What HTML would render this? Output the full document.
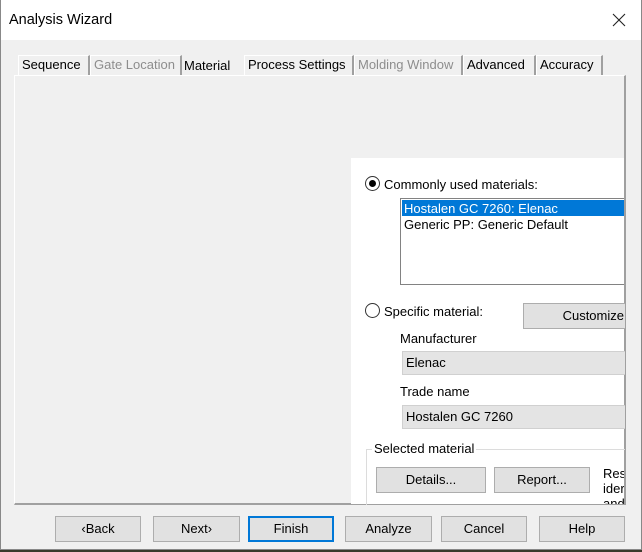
<!DOCTYPE html>
<html><head><style>
*{margin:0;padding:0;box-sizing:border-box}
body{width:642px;height:552px;background:#3a3a2a;font-family:"Liberation Sans",sans-serif;font-size:13px;color:#000;position:relative;overflow:hidden}
.win{position:absolute;left:0;top:0;width:642px;height:550px;background:#f0f0f0;border-left:1px solid #888;border-right:1px solid #888;border-bottom:1px solid #888}
.title{position:absolute;left:0;top:0;width:640px;height:40px;background:#fff}
.abs{position:absolute}
.tab{position:absolute;top:55px;height:20px;line-height:18px;padding-left:3px;border-right:2px solid #a0a0a0;border-left:1px solid #fff;border-top:1px solid #fff;white-space:nowrap}
.dis{color:#8d8d8d}
.btn{position:absolute;background:#e1e1e1;border:1px solid #adadad;text-align:center;line-height:24px}
.field{position:absolute;background:#e4e4e4;border:1px solid #d0d0d0;padding-left:3px;line-height:22px}
</style></head><body>
<div class="win">
<div class="title"></div>
<div class="abs" style="left:8px;top:12px;font-size:14.5px">Analysis Wizard</div>
<svg class="abs" style="left:611px;top:13px" width="14" height="14"><path d="M1 1L13 13M13 1L1 13" stroke="#222" stroke-width="1.1"/></svg>

<div class="tab" style="left:17px;width:72px">Sequence</div>
<div class="tab dis" style="left:89px;width:92px">Gate Location</div>
<div class="tab" style="left:181px;width:63px;border:none;top:56px;line-height:18px;padding-top:1px;padding-left:2px">Material</div>
<div class="tab" style="left:243px;width:110px">Process Settings</div>
<div class="tab dis" style="left:353px;width:109px">Molding Window</div>
<div class="tab" style="left:462px;width:73px">Advanced</div>
<div class="tab" style="left:535px;width:67px">Accuracy</div>

<div class="abs" style="left:13px;top:75px;width:612px;height:430px;border-left:1px solid #fff;border-top:1px solid #fff;border-right:2px solid #a0a0a0;border-bottom:2px solid #a0a0a0"></div>
<div class="abs" style="left:350px;top:158px;width:273px;height:346px;background:#fff"></div>

<div class="abs" style="left:364px;top:176px;width:15px;height:15px;border:1px solid #333;border-radius:50%;background:#fff"></div>
<div class="abs" style="left:368px;top:180px;width:7px;height:7px;border-radius:50%;background:#000"></div>
<div class="abs" style="left:383px;top:177px">Commonly used materials:</div>
<div class="abs" style="left:399px;top:198px;width:224px;height:87px;border:1px solid #828282;border-right:none;background:#fff"></div>
<div class="abs" style="left:401px;top:200px;width:222px;height:16px;background:#0078d7"></div>
<div class="abs" style="left:403px;top:201px;color:#fff">Hostalen GC 7260: Elenac</div>
<div class="abs" style="left:403px;top:217px">Generic PP: Generic Default</div>

<div class="abs" style="left:364px;top:303px;width:15px;height:15px;border:1px solid #333;border-radius:50%;background:#fff"></div>
<div class="abs" style="left:383px;top:304px">Specific material:</div>
<div class="btn" style="left:522px;top:303px;width:102px;height:26px;border-right:none;text-align:right;padding-right:1px">Customize</div>
<div class="abs" style="left:399px;top:331px">Manufacturer</div>
<div class="field" style="left:401px;top:351px;width:223px;height:24px;border-right:none">Elenac</div>
<div class="abs" style="left:399px;top:384px">Trade name</div>
<div class="field" style="left:401px;top:405px;width:223px;height:24px;border-right:none">Hostalen GC 7260</div>
<div class="abs" style="left:365px;top:449px;width:259px;height:56px;border-left:1px solid #dcdcdc;border-top:1px solid #dcdcdc"></div>
<div class="abs" style="left:371px;top:441px;background:#fff;padding:0 2px">Selected material</div>
<div class="btn" style="left:375px;top:467px;width:110px;height:26px">Details...</div>
<div class="btn" style="left:493px;top:467px;width:96px;height:26px">Report...</div>
<div class="abs" style="left:602px;top:466px;line-height:15px;width:21px;overflow:hidden;height:38px">Res<br>ider<br>and</div>

<div class="btn" style="left:54px;top:516px;width:86px;height:26px">‹Back</div>
<div class="btn" style="left:152px;top:516px;width:87px;height:26px">Next›</div>
<div class="btn" style="left:247px;top:516px;width:86px;height:26px;border:2px solid #0078d7;line-height:22px">Finish</div>
<div class="btn" style="left:344px;top:516px;width:87px;height:26px">Analyze</div>
<div class="btn" style="left:440px;top:516px;width:86px;height:26px">Cancel</div>
<div class="btn" style="left:538px;top:516px;width:86px;height:26px">Help</div>
</div>
</body></html>
